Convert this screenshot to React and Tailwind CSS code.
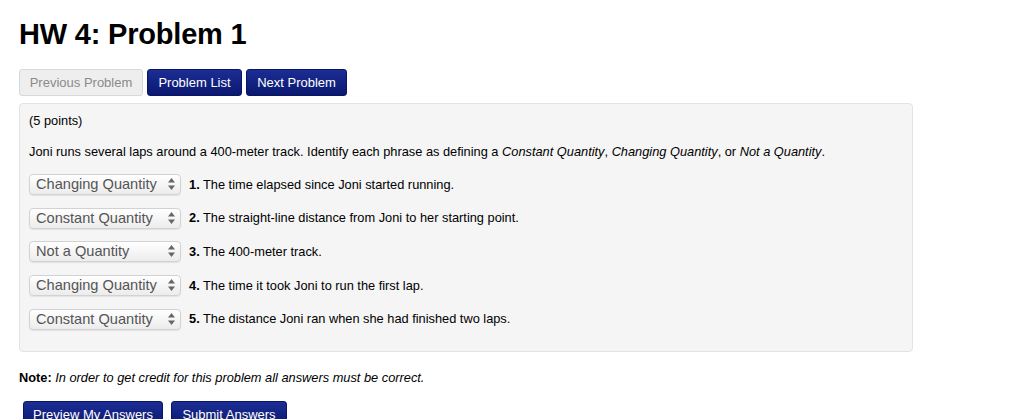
import { useState } from "react";

const OPTIONS = ["Changing Quantity", "Constant Quantity", "Not a Quantity"];

const ITEMS = [
  { n: 1, text: "The time elapsed since Joni started running.", value: "Changing Quantity" },
  { n: 2, text: "The straight-line distance from Joni to her starting point.", value: "Constant Quantity" },
  { n: 3, text: "The 400-meter track.", value: "Not a Quantity" },
  { n: 4, text: "The time it took Joni to run the first lap.", value: "Changing Quantity" },
  { n: 5, text: "The distance Joni ran when she had finished two laps.", value: "Constant Quantity" },
];

function QuantitySelect({ value, onChange }) {
  return (
    <div className="relative w-[152px] h-[21px] shrink-0">
      <select
        value={value}
        onChange={(e) => onChange(e.target.value)}
        className="appearance-none w-full h-full rounded-[4px] border border-[#d2d2d2] bg-linear-to-b from-[#ffffff] to-[#ececec] pl-[6px] pr-5 text-[14.6px] leading-[19px] text-[#555] shadow-[0_1px_1px_rgba(0,0,0,0.08)] outline-none"
      >
        {OPTIONS.map((o) => (
          <option key={o}>{o}</option>
        ))}
      </select>
      {/* up/down arrows */}
      <svg className="pointer-events-none absolute right-[6px] top-[4px]" width="7" height="12" viewBox="0 0 7 12">
        <path d="M3.5 0 L7 4.5 L0 4.5 Z" fill="#666" />
        <path d="M3.5 12 L7 7.5 L0 7.5 Z" fill="#666" />
      </svg>
    </div>
  );
}

export default function App() {
  const [answers, setAnswers] = useState(ITEMS.map((i) => i.value));

  const navBtn =
    "h-[27px] rounded-[3px] border border-[#0a1566] bg-linear-to-b from-[#1c2d94] to-[#0a186f] text-white text-[13px] whitespace-nowrap";

  return (
    <div className="min-h-screen bg-white text-black pl-[19px] pt-[14px]" style={{ fontFamily: '"Liberation Sans", Arial, sans-serif' }}>
      <h1 className="text-[29px] font-bold leading-[40px] tracking-[-0.2px]">HW 4: Problem 1</h1>

      {/* Navigation */}
      <div className="flex gap-[4px] mt-[15px]">
        <button className="h-[27px] w-[124px] rounded-[3px] border border-[#d8d8d8] bg-[#eeeeee] text-[#8a8a8a] text-[13px] whitespace-nowrap">
          Previous Problem
        </button>
        <button className={navBtn + " w-[95px]"}>Problem List</button>
        <button className={navBtn + " w-[101px]"}>Next Problem</button>
      </div>

      {/* Problem panel */}
      <div className="mt-[7px] w-[894px] rounded-[4px] border border-[#e3e3e3] bg-[#f5f5f5] pl-[9px] pt-[8px] pb-[21px] text-[12.8px] leading-[18px]">
        <p>(5 points)</p>
        <p className="mt-[13px]">
          Joni runs several laps around a 400-meter track. Identify each phrase as defining a{" "}
          <i>Constant Quantity</i>, <i>Changing Quantity</i>, or <i>Not a Quantity</i>.
        </p>

        <div className="mt-[13px] flex flex-col gap-[12.7px]">
          {ITEMS.map((item, idx) => (
            <div key={item.n} className="flex items-center gap-[8px]">
              <QuantitySelect
                value={answers[idx]}
                onChange={(v) => setAnswers(answers.map((a, j) => (j === idx ? v : a)))}
              />
              <span>
                <b>{item.n}.</b> {item.text}
              </span>
            </div>
          ))}
        </div>
      </div>

      <p className="mt-[17px] text-[12.8px] leading-[18px]">
        <b>Note:</b> <i>In order to get credit for this problem all answers must be correct.</i>
      </p>

      <div className="flex gap-[8px] mt-[14px] ml-[4px]">
        <button className={navBtn + " w-[140px]"}>Preview My Answers</button>
        <button className={navBtn + " w-[116px]"}>Submit Answers</button>
      </div>
    </div>
  );
}
